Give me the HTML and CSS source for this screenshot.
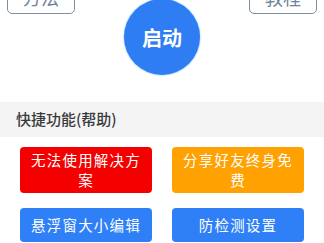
FILE: index.html
```html
<!DOCTYPE html>
<html lang="zh">
<head>
<meta charset="utf-8">
<link rel="stylesheet" href="styles.css">
</head>
<body>
<div class="top">
  <div class="link-btn">方法</div>
  <div class="start">启动</div>
  <div class="link-btn">教程</div>
</div>
<div class="section-title">快捷功能(帮助)</div>
<div class="grid">
  <div class="btn red">无法使用解决方案</div>
  <div class="btn orange">分享好友终身免费</div>
  <div class="btn blue">悬浮窗大小编辑</div>
  <div class="btn blue">防检测设置</div>
</div>
</body>
</html>
```

FILE: styles.css
```css
html, body {
  margin: 0;
  padding: 0;
  background: #ffffff;
  font-family: "Noto Sans CJK SC", "Noto Sans", sans-serif;
  overflow: hidden;
}
.top {
  display: grid;
  grid-template-columns: 68px 1fr 68px;
  align-items: start;
  padding: 0 7px 0 7px;
  margin-top: -20px;
  height: 122px;
}
.link-btn {
  box-sizing: border-box;
  height: 34px;
  border: 1px solid #7d8ea3;
  border-radius: 5px;
  color: #6e829b;
  font-size: 18px;
  line-height: 32px;
  text-align: center;
}
.start {
  justify-self: center;
  margin-top: 19px;
  width: 76px;
  height: 76px;
  border-radius: 50%;
  background: #2f7df3;
  box-shadow: 0 0 1.5px 0.5px #a9d4ff;
  color: #ffffff;
  font-size: 20px;
  font-weight: 700;
  display: flex;
  align-items: center;
  justify-content: center;
}
.section-title {
  background: #f4f4f5;
  height: 35px;
  line-height: 33px;
  padding-left: 16px;
  font-size: 15px;
  color: #3a3a3a;
  font-weight: 500;
}
.grid {
  display: grid;
  grid-template-columns: 132px 132px;
  column-gap: 20px;
  row-gap: 15px;
  padding: 10px 20px 0 20px;
}
.btn {
  box-sizing: border-box;
  min-height: 34px;
  border-radius: 4px;
  color: #ffffff;
  font-size: 14.5px;
  line-height: 20px;
  letter-spacing: 1.2px;
  padding: 3px 9px;
  text-align: center;
  display: flex;
  align-items: center;
  justify-content: center;
}
.red { background: #f40000; }
.orange { background: #ffa100; }
.blue { background: #2f80f7; }
```
